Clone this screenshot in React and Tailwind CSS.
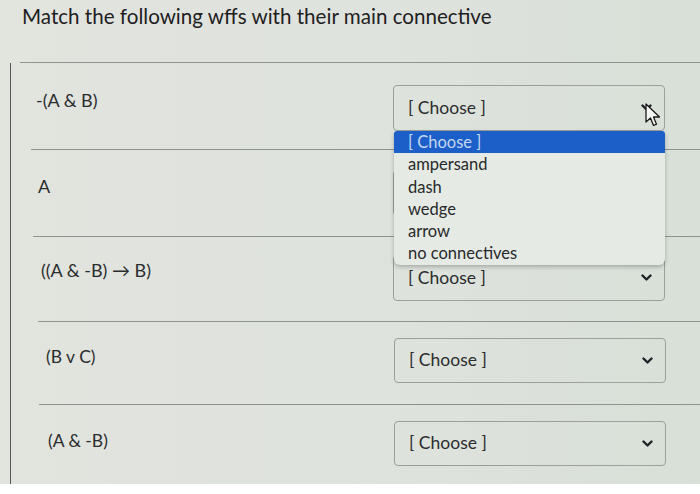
import React from 'react';

const OPTIONS = ['ampersand', 'dash', 'wedge', 'arrow', 'no connectives'];

const Chevron = () => (
  <svg width="11" height="8" viewBox="0 0 11 8" className="shrink-0">
    <path d="M1.5 1.5 L5.5 5.5 L9.5 1.5" fill="none" stroke="#1f2326" strokeWidth="2.4" strokeLinecap="round" strokeLinejoin="round" />
  </svg>
);

// mouse pointer hovering over the open select's arrow
const Cursor = () => (
  <svg width="18" height="26" viewBox="0 0 18 26" className="absolute right-[2px] top-[17px]">
    <path d="M2 1 L2 19 L6.5 15 L9.5 22.5 L12.5 21.2 L9.5 14 L15.5 14 Z" fill="#f4f6f2" stroke="#1a1a1a" strokeWidth="1.3" strokeLinejoin="round" />
  </svg>
);

const Select = ({ className, open, empty }) => (
  <div className={`relative flex w-[272px] items-center justify-between rounded-[4px] border border-[#9c9f9a] pl-[14px] pr-[12px] text-[17.5px] text-[#2b2d2e] ${className}`}>
    <span>{empty ? '' : '[ Choose ]'}</span>
    <Chevron />
    {open && <Cursor />}
  </div>
);

const Dropdown = () => (
  <div className="absolute left-[1px] top-[46px] z-20 w-[271px] overflow-hidden rounded-b-[6px] rounded-t-[3px] bg-[#e6eae4] shadow-[0_2px_4px_rgba(0,0,0,0.25)] text-[16.5px] leading-[22.3px] text-[#26292b]">
    <div className="bg-[#1d5fc8] pl-[14px] text-[#c4d7f2]">[ Choose ]</div>
    {OPTIONS.map((o) => (
      <div key={o} className="pl-[14px]">{o}</div>
    ))}
  </div>
);

export default function App() {
  return (
    <div className="h-[494px] w-[700px] overflow-hidden bg-white font-['Lato','Liberation_Sans',sans-serif]">
      <div className="h-[484px] bg-gradient-to-r from-[#e2e4de] via-[#dfe3dd] to-[#d8e0d8]">
        <div className="h-[62px] pl-[22px] pt-[2px] text-[20.6px] leading-[28px] text-[#1e2022]">
          Match the following wffs with their main connective
        </div>
        <div className="ml-[20px] border-t border-[#8f938d]" />

        <div className="ml-[10px] h-[421px] border-l border-[#55585a]">
          {/* row 1 */}
          <div className="ml-[20px] flex h-[87px] border-b border-[#8f938d]">
            <div className="mt-[25px] w-[362px] pl-[5px] text-[18px] leading-[24px] text-[#2a2c2e]">-(A &amp; B)</div>
            <div className="relative mt-[22px] self-start">
              <Select className="h-[46px]" open />
              <Dropdown />
            </div>
          </div>

          {/* row 2 */}
          <div className="ml-[22px] flex h-[87px] border-b border-[#8f938d]">
            <div className="mt-[24px] w-[360px] pl-[5px] text-[18px] leading-[24px] text-[#2a2c2e]">A</div>
            <Select className="mt-[20px] h-[46px] self-start" empty />
          </div>

          {/* row 3 */}
          <div className="ml-[27px] flex h-[85px] border-b border-[#8f938d]">
            <div className="mt-[21px] w-[355px] pl-[3px] text-[18px] leading-[24px] text-[#2a2c2e]">((A &amp; -B) → B)</div>
            <Select className="mt-[18px] h-[46px] self-start" />
          </div>

          {/* row 4 */}
          <div className="ml-[28px] flex h-[83px] border-b border-[#8f938d]">
            <div className="mt-[23px] w-[355px] pl-[7px] text-[17.5px] leading-[24px] text-[#2a2c2e]">(B v C)</div>
            <Select className="mt-[16px] h-[45px] self-start w-[270px]" />
          </div>

          {/* row 5 */}
          <div className="ml-[28px] flex h-[79px]">
            <div className="mt-[24px] w-[355px] pl-[9px] text-[17.5px] leading-[24px] text-[#2a2c2e]">(A &amp; -B)</div>
            <Select className="mt-[16px] h-[45px] self-start" />
          </div>
        </div>
      </div>
    </div>
  );
}
